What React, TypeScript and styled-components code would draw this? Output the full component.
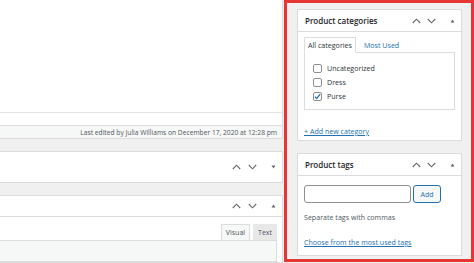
import React from "react";
import styled, { createGlobalStyle } from "styled-components";

const Global = createGlobalStyle`
  html, body { margin: 0; padding: 0; }
  body {
    background: #f0f0f1;
    font-family: "Open Sans", "Liberation Sans", sans-serif;
    color: #2c3338;
    -webkit-font-smoothing: antialiased;
  }
  * { box-sizing: border-box; }
`;

const Page = styled.div`
  display: flex;
  width: 474px;
  height: 263px;
  overflow: hidden;
  background: #f0f0f1;
`;

const MainColumn = styled.div`
  width: 284px;
  display: flex;
  flex-direction: column;
  gap: 12px;
`;

const EditorBox = styled.div`
  width: 283px;
  display: flex;
  flex-direction: column;
  background: #fff;
  border-right: 1px solid #dcdcde;
  border-bottom: 1px solid #dcdcde;
`;

const EditorContent = styled.div`
  height: 113px;
  border-bottom: 1px solid #e2e4e7;
`;

const EditorStrip = styled.div`
  height: 12px;
`;

const StatusBar = styled.div`
  height: 13px;
  background: #f6f7f7;
  border-top: 1px solid #dcdcde;
  display: flex;
  align-items: center;
  justify-content: flex-end;
  padding-right: 5px;
  font-size: 6.7px;
  color: #50575e;
  white-space: nowrap;
`;

const MainBox = styled.div<{ $grow?: boolean }>`
  width: 283px;
  background: #fff;
  border: 1px solid #dcdcde;
  border-left: none;
  display: flex;
  flex-direction: column;
  ${(p) => (p.$grow ? "flex: 1;" : "")}
`;

const MainHeader = styled.div<{ $h: number; $divider?: boolean }>`
  height: ${(p) => p.$h}px;
  display: flex;
  align-items: center;
  justify-content: flex-end;
  padding-right: 6px;
  ${(p) => (p.$divider ? "border-bottom: 1px solid #dcdcde;" : "")}
`;

const EditorArea = styled.div`
  flex: 1;
  padding: 7px 5px 0 0;
  display: flex;
  flex-direction: column;
`;

const ModeTabs = styled.div`
  display: flex;
  justify-content: flex-end;
  gap: 3px;
`;

const ModeTab = styled.div<{ $active?: boolean }>`
  height: 16px;
  padding: 0 4px;
  display: flex;
  align-items: center;
  font-size: 7px;
  color: #50575e;
  background: ${(p) => (p.$active ? "#f6f7f7" : "#e8e8e9")};
  border: 1px solid ${(p) => (p.$active ? "#dcdcde" : "#e8e8e9")};
  border-bottom: none;
`;

const Toolbar = styled.div`
  flex: 1;
  background: #f6f7f7;
  border: 1px solid #dcdcde;
  border-left: none;
`;

const Sidebar = styled.div`
  width: 190px;
  height: 262px;
  border: 3px solid #e53535;
  padding: 6px 9px 0 10px;
  display: flex;
  flex-direction: column;
  gap: 12px;
`;

const PostBox = styled.div`
  background: #fff;
  border: 1px solid #dcdcde;
  display: flex;
  flex-direction: column;
`;

const BoxHeader = styled.div`
  height: 22px;
  border-bottom: 1px solid #dcdcde;
  display: flex;
  align-items: center;
  justify-content: space-between;
  padding: 0 6px 0 7px;
`;

const BoxTitle = styled.h2`
  margin: 0;
  font-size: 8px;
  font-weight: 600;
  color: #1d2327;
`;

const Actions = styled.div`
  display: flex;
  align-items: center;
`;

const ChevronBtn = styled.svg<{ $gap: number }>`
  width: 9px;
  height: 6px;
  margin-right: ${(p) => p.$gap}px;
  display: block;
`;

const Toggle = styled.svg`
  width: 5px;
  height: 4px;
  display: block;
`;

const BoxBody = styled.div<{ $pt: number; $pb: number }>`
  padding: ${(p) => p.$pt}px 6px ${(p) => p.$pb}px 6px;
  display: flex;
  flex-direction: column;
`;

const TabRow = styled.div`
  display: flex;
  align-items: flex-end;
  gap: 4px;
  position: relative;
  z-index: 1;
  margin-bottom: -1px;
`;

const CatTab = styled.div<{ $active?: boolean }>`
  height: 16px;
  padding: 0 3px;
  display: flex;
  align-items: center;
  font-size: 7.1px;
  white-space: nowrap;
  color: ${(p) => (p.$active ? "#2c3338" : "#2271b1")};
  background: ${(p) => (p.$active ? "#fff" : "transparent")};
  border: 1px solid ${(p) => (p.$active ? "#dcdcde" : "transparent")};
  border-bottom-color: ${(p) => (p.$active ? "#fff" : "transparent")};
`;

const Panel = styled.div`
  border: 1px solid #dcdcde;
  background: #fff;
  padding: 8px 8px 6px 8px;
  display: flex;
  flex-direction: column;
`;

const CheckRow = styled.label`
  height: 14px;
  display: flex;
  align-items: center;
  gap: 5px;
  font-size: 7.1px;
  color: #2c3338;
`;

const Box = styled.span`
  width: 9px;
  height: 9px;
  border: 1px solid #8c8f94;
  border-radius: 2px;
  background: #fff;
  display: flex;
  align-items: center;
  justify-content: center;
`;

const Check = styled.svg`
  width: 7px;
  height: 7px;
  display: block;
`;

const LinkText = styled.a<{ $mt: number }>`
  margin-top: ${(p) => p.$mt}px;
  font-size: 7.1px;
  line-height: 10px;
  color: #2271b1;
  text-decoration: underline;
  white-space: nowrap;
  align-self: flex-start;
`;

const InputRow = styled.div`
  display: flex;
  gap: 2px;
`;

const TagInput = styled.input`
  width: 107px;
  height: 18px;
  border: 1px solid #8c8f94;
  border-radius: 3px;
  background: #fff;
  padding: 0 4px;
  font-size: 7px;
  outline: none;
`;

const AddButton = styled.button`
  width: 28px;
  height: 18px;
  border: 1px solid #2271b1;
  border-radius: 3px;
  background: #f6f7f7;
  color: #2271b1;
  font-family: inherit;
  font-size: 7px;
  padding: 0;
`;

const Hint = styled.p`
  margin: 9px 0 0 0;
  font-size: 7.1px;
  line-height: 10px;
  color: #50575e;
  white-space: nowrap;
`;

const HeaderActions: React.FC<{ down?: boolean; gapA?: number }> = ({ down, gapA = 6 }) => (
  <Actions>
    <ChevronBtn $gap={gapA} viewBox="0 0 9 6">
      <path d="M0.8 5 L4.5 1.2 L8.2 5" fill="none" stroke="#646970" strokeWidth="1.1" />
    </ChevronBtn>
    <ChevronBtn $gap={14} viewBox="0 0 9 6">
      <path d="M0.8 1 L4.5 4.8 L8.2 1" fill="none" stroke="#646970" strokeWidth="1.1" />
    </ChevronBtn>
    <Toggle viewBox="0 0 5 4">
      {down ? <polygon points="0.5,0.5 4.5,0.5 2.5,3.5" fill="#646970" /> : <polygon points="0.5,3.5 4.5,3.5 2.5,0.5" fill="#646970" />}
    </Toggle>
  </Actions>
);

const categories = [
  { name: "Uncategorized", checked: false },
  { name: "Dress", checked: false },
  { name: "Purse", checked: true },
];

export default function App() {
  return (
    <>
      <Global />
      <Page>
        <MainColumn>
          <EditorBox>
            <EditorContent />
            <EditorStrip />
            <StatusBar>Last edited by Julia Williams on December 17, 2020 at 12:28 pm</StatusBar>
          </EditorBox>
          <MainBox>
            <MainHeader $h={30}>
              <HeaderActions down gapA={7} />
            </MainHeader>
          </MainBox>
          <MainBox $grow>
            <MainHeader $h={21} $divider>
              <HeaderActions gapA={7} />
            </MainHeader>
            <EditorArea>
              <ModeTabs>
                <ModeTab $active>Visual</ModeTab>
                <ModeTab>Text</ModeTab>
              </ModeTabs>
              <Toolbar />
            </EditorArea>
          </MainBox>
        </MainColumn>
        <Sidebar>
          <PostBox>
            <BoxHeader>
              <BoxTitle>Product categories</BoxTitle>
              <HeaderActions />
            </BoxHeader>
            <BoxBody $pt={5} $pb={4}>
              <TabRow>
                <CatTab $active>All categories</CatTab>
                <CatTab>Most Used</CatTab>
              </TabRow>
              <Panel>
                {categories.map((c) => (
                  <CheckRow key={c.name}>
                    <Box>
                      {c.checked && (
                        <Check viewBox="0 0 7 7">
                          <path d="M0.8 3.6 L2.7 5.5 L6.2 1.2" fill="none" stroke="#2271b1" strokeWidth="1.2" />
                        </Check>
                      )}
                    </Box>
                    {c.name}
                  </CheckRow>
                ))}
              </Panel>
              <LinkText $mt={16}>+ Add new category</LinkText>
            </BoxBody>
          </PostBox>
          <PostBox>
            <BoxHeader>
              <BoxTitle>Product tags</BoxTitle>
              <HeaderActions />
            </BoxHeader>
            <BoxBody $pt={9} $pb={8}>
              <InputRow>
                <TagInput />
                <AddButton>Add</AddButton>
              </InputRow>
              <Hint>Separate tags with commas</Hint>
              <LinkText $mt={15}>Choose from the most used tags</LinkText>
            </BoxBody>
          </PostBox>
        </Sidebar>
      </Page>
    </>
  );
}
